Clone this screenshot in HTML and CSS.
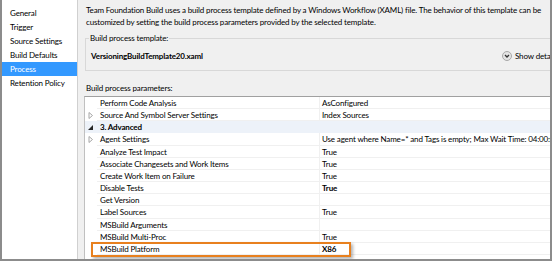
FILE: index.html
```html
<!DOCTYPE html>
<html>
<head>
<meta charset="utf-8">
<link rel="stylesheet" href="styles.css">
</head>
<body>
<div class="frame">
  <nav class="nav">
    <div class="nav-item">General</div>
    <div class="nav-item">Trigger</div>
    <div class="nav-item">Source Settings</div>
    <div class="nav-item">Build Defaults</div>
    <div class="nav-item selected">Process</div>
    <div class="nav-item">Retention Policy</div>
  </nav>
  <main class="panel">
    <p class="desc">Team Foundation Build uses a build process template defined by a Windows Workflow (XAML) file. The behavior of this template can be customized by setting the build process parameters provided by the selected template.</p>
    <fieldset class="group">
      <legend class="legend">Build process template:</legend>
      <div class="tpl-row">
        <span class="tpl-name">VersioningBuildTemplate20.xaml</span>
        <span class="show">
          <svg class="show-icon" width="10" height="10" viewBox="0 0 10 10"><circle cx="5" cy="5" r="4.5" fill="#e4e4e4" stroke="#a8a8a8"/><path d="M3 4 L5 6 L7 4" fill="none" stroke="#333" stroke-width="1.3"/></svg>
          <span>Show details</span>
        </span>
      </div>
    </fieldset>
    <div class="params-label">Build process parameters:</div>
    <div class="grid">
      <div class="row"><div class="gut"></div><div class="name">Perform Code Analysis</div><div class="val">AsConfigured</div></div>
      <div class="row"><div class="gut"><svg width="6" height="7" viewBox="0 0 6 7"><path d="M1 0.5 L4.5 3.5 L1 6.5 Z" fill="none" stroke="#a6a6a6"/></svg></div><div class="name">Source And Symbol Server Settings</div><div class="val">Index Sources</div></div>
      <div class="row cat"><div class="gut"><svg width="6" height="7" viewBox="0 0 6 7"><path d="M5 1 L5 6 L0 6 Z" fill="#262626"/></svg></div><div class="name">3. Advanced</div></div>
      <div class="row"><div class="gut"><svg width="6" height="7" viewBox="0 0 6 7"><path d="M1 0.5 L4.5 3.5 L1 6.5 Z" fill="none" stroke="#a6a6a6"/></svg></div><div class="name">Agent Settings</div><div class="val">Use agent where Name=* and Tags is empty; Max Wait Time: 04:00:00</div></div>
      <div class="row"><div class="gut"></div><div class="name">Analyze Test Impact</div><div class="val">True</div></div>
      <div class="row"><div class="gut"></div><div class="name">Associate Changesets and Work Items</div><div class="val">True</div></div>
      <div class="row"><div class="gut"></div><div class="name">Create Work Item on Failure</div><div class="val">True</div></div>
      <div class="row"><div class="gut"></div><div class="name">Disable Tests</div><div class="val bold">True</div></div>
      <div class="row"><div class="gut"></div><div class="name">Get Version</div><div class="val"></div></div>
      <div class="row"><div class="gut"></div><div class="name">Label Sources</div><div class="val">True</div></div>
      <div class="row"><div class="gut"></div><div class="name">MSBuild Arguments</div><div class="val"></div></div>
      <div class="row"><div class="gut"></div><div class="name">MSBuild Multi-Proc</div><div class="val">True</div></div>
      <div class="row"><div class="gut"></div><div class="name">MSBuild Platform</div><div class="val bold">X86</div></div>
      <div class="highlight"></div>
    </div>
  </main>
</div>
</body>
</html>
```
FILE: styles.css
```css
* { box-sizing: border-box; }
html, body { margin: 0; padding: 0; }
body {
  width: 552px;
  height: 261px;
  overflow: hidden;
  background: #f0f0f0;
  font-family: Lato, "Open Sans", sans-serif;
  font-size: 8px;
  letter-spacing: -0.15px;
  color: #000;
}
.frame {
  width: 552px;
  height: 261px;
  display: flex;
  border-left: 2px solid #8c8c8c;
  border-right: 2px solid #8c8c8c;
  border-bottom: 2px solid #8c8c8c;
  overflow: hidden;
}
.nav {
  width: 76px;
  flex: none;
  background: #fff;
  border-right: 1px solid #d0d0d0;
  padding-top: 6px;
}
.nav-item {
  height: 14px;
  line-height: 14px;
  padding-left: 8px;
  white-space: nowrap;
}
.nav-item.selected {
  background: #3399ff;
  color: #fff;
}
.panel {
  flex: 1;
  min-width: 0;
  overflow: hidden;
  padding: 4px 0 0 8px;
  display: flex;
  flex-direction: column;
}
.desc {
  margin: 0;
  line-height: 12px;
  width: 470px;
}
.group {
  margin: 4px 0 0 -1px;
  width: 600px;
  border: 1px solid #d8d8d8;
  padding: 0 0 8px 5px;
  flex: none;
}
.legend {
  padding: 0 1px;
  margin-left: -2px;
  line-height: 12px;
}
.tpl-row {
  display: grid;
  grid-template-columns: 411px auto;
  justify-content: start;
  align-items: center;
  height: 12px;
  margin-top: 6px;
}
.tpl-name {
  font-weight: bold;
}
.show {
  display: flex;
  align-items: center;
  gap: 3px;
  white-space: nowrap;
}
.show-icon { display: block; }
.params-label {
  margin-top: 11px;
  line-height: 12px;
}
.grid {
  margin: 2px 0 0 -2px;
  width: 600px;
  flex: 1;
  background: #fff;
  border-top: 1px solid #a0a0a0;
  border-left: 1px solid #c0c0c0;
  position: relative;
}
.row {
  display: flex;
  height: 12.17px;
  line-height: 12px;
  white-space: nowrap;
}
.gut {
  width: 12px;
  flex: none;
  display: flex;
  align-items: center;
  justify-content: center;
}
.gut svg { display: block; }
.name {
  width: 223px;
  flex: none;
  padding-left: 3px;
  border-bottom: 1px solid #f0f0f0;
  border-right: 1px solid #f0f0f0;
  overflow: hidden;
}
.val {
  flex: 1;
  padding-left: 2px;
  border-bottom: 1px solid #f0f0f0;
  overflow: hidden;
}
.bold { font-weight: bold; }
.cat { background: #edf2f9; }
.cat .name { font-weight: bold; border: none; }
.highlight {
  position: absolute;
  left: 6px;
  top: 145px;
  width: 260px;
  height: 15px;
  border: 2px solid #e8801e;
  box-shadow: 2px 2px 3px rgba(0,0,0,0.3);
}
```
